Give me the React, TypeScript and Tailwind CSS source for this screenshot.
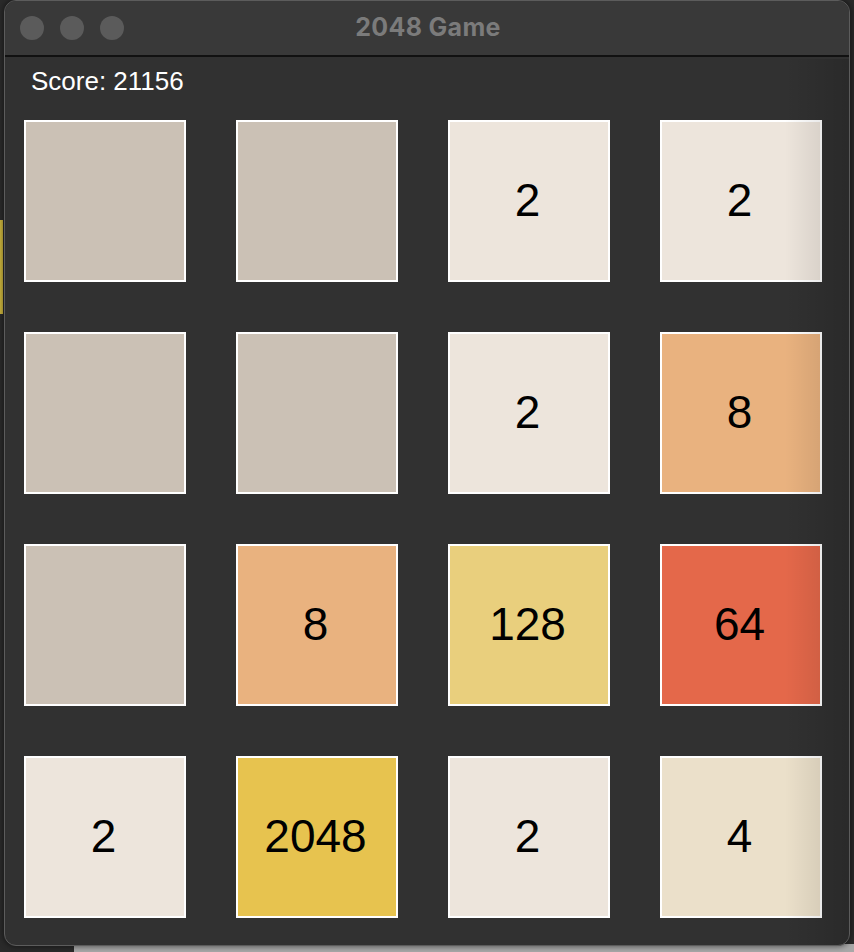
const board: number[][] = [
  [0, 0, 2, 2],
  [0, 0, 2, 8],
  [0, 8, 128, 64],
  [2, 2048, 2, 4],
];

const tileColors: Record<number, string> = {
  0: "bg-[#cbc1b5]",
  2: "bg-[#ede5dc]",
  4: "bg-[#ebe0ca]",
  8: "bg-[#e9b27f]",
  64: "bg-[#e4684a]",
  128: "bg-[#e9cf7d]",
  2048: "bg-[#e7c34f]",
};

function Tile({ value }: { value: number }) {
  return (
    <div
      className={`w-[162px] h-[162px] border-2 border-white flex items-center justify-center pr-[3px] pb-[3px] ${tileColors[value]}`}
    >
      {value > 0 && (
        <span className="text-[46px] leading-none text-black font-['Liberation_Sans',Arial,sans-serif]">
          {value}
        </span>
      )}
    </div>
  );
}

export default function App() {
  return (
    <div className="relative w-[854px] h-[952px] bg-[#2a2a2a] overflow-hidden">
      {/* desktop bits peeking out behind the window */}
      <div className="absolute left-0 top-[220px] w-[3px] h-[94px] bg-[#c9b23c]" />
      <div className="absolute left-[74px] top-[944px] w-[780px] h-[8px] bg-[#a8a8a8]" />

      {/* window */}
      <div className="absolute left-[4px] top-0 w-[846px] h-[946px] rounded-[12px] border border-[#5c5c5c] bg-[#313131] overflow-hidden shadow-[0_0_6px_rgba(0,0,0,0.6)]">
        {/* title bar */}
        <div className="relative h-[56px] bg-[#393939] border-b-2 border-[#111] flex items-center">
          <div className="flex gap-[16px] pl-[15px]">
            <span className="w-[24px] h-[24px] rounded-full bg-[#5b5b5b]" />
            <span className="w-[24px] h-[24px] rounded-full bg-[#5b5b5b]" />
            <span className="w-[24px] h-[24px] rounded-full bg-[#5b5b5b]" />
          </div>
          <div className="absolute inset-0 flex items-center justify-center pl-[2px]">
            <span className="text-[25px] font-bold text-[#7b7b7b] tracking-[0.3px] font-['Inter',sans-serif]">
              2048 Game
            </span>
          </div>
        </div>

        {/* score + board */}
        <div className="pl-[19px] pt-[8px]">
          <div className="pl-[7px] h-[32px] flex items-center text-[26px] text-white font-['Liberation_Sans',Arial,sans-serif]">
            Score: 21156
          </div>
          <div className="mt-[23px] grid grid-cols-[repeat(4,162px)] gap-x-[50px] gap-y-[50px]">
            {board.flat().map((v, i) => (
              <Tile key={i} value={v} />
            ))}
          </div>
        </div>

        {/* shading on the right edge */}
        <div className="absolute right-0 top-[58px] bottom-0 w-[64px] bg-gradient-to-r from-transparent to-black/15 pointer-events-none" />
      </div>
    </div>
  );
}
